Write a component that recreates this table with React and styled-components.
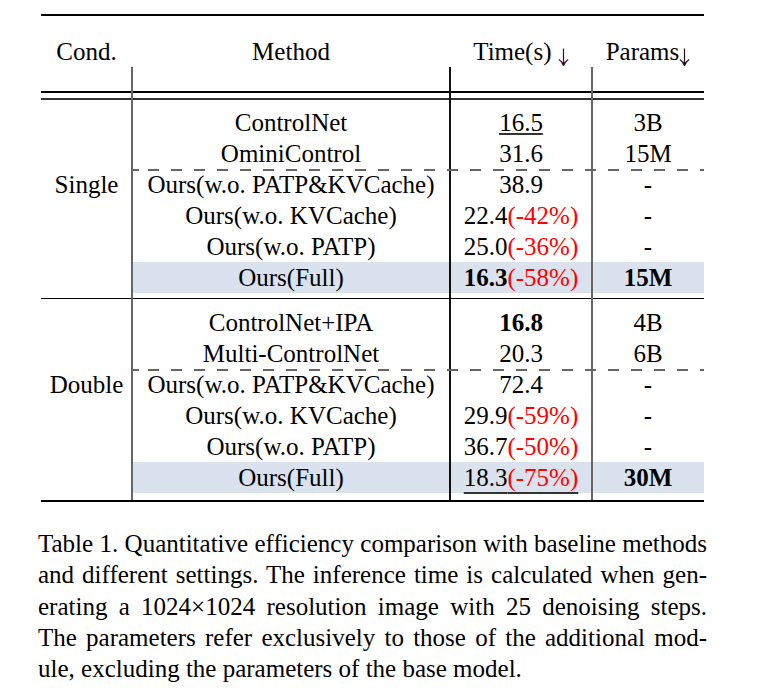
import React from "react";
import styled, { createGlobalStyle } from "styled-components";

const Global = createGlobalStyle`
  html, body { margin: 0; padding: 0; background: #fff; }
  body { font-family: "Liberation Serif", "Times New Roman", serif; color: #000; }
`;

const Page = styled.div`
  padding: 14px 0 0 38px;
  width: 759px;
  box-sizing: border-box;
`;

const TableBox = styled.div`
  margin-left: 3px;
  width: 663px;
  font-size: 25px;
`;

const TopRule = styled.div`
  height: 2px;
  background: #000;
`;

const Grid = styled.div`
  display: grid;
  grid-template-columns: 91px 318px 142px 112px;
  grid-template-rows: 51px 24px 2px 5px 2px 7px repeat(6, 31px) 5px 1px 8px repeat(6, 31px) 7px 2px;
`;

const HeadCell = styled.div`
  grid-row: 1;
  grid-column: ${(p) => p.$col};
  padding-top: 20px;
  line-height: 31px;
  text-align: center;
  white-space: nowrap;
`;

const Arrow = styled.svg`
  display: inline-block;
  width: 11px;
  height: 18px;
  vertical-align: -6px;
`;

const HRule = styled.div`
  grid-column: 1 / -1;
  grid-row: ${(p) => p.$row};
  background: ${(p) => p.$color || "#000"};
  z-index: 2;
`;

const VLine = styled.div`
  grid-column: ${(p) => p.$col};
  grid-row: 2 / 23;
  justify-self: start;
  width: ${(p) => p.$w}px;
  margin-left: ${(p) => -p.$w / 2}px;
  background: ${(p) => p.$color};
  z-index: 3;
`;

const Cell = styled.div`
  grid-row: ${(p) => p.$row};
  grid-column: ${(p) => p.$col};
  line-height: 31px;
  text-align: center;
  white-space: nowrap;
  background: ${(p) => (p.$hl ? "#dae3ed" : "transparent")};
`;

const CondCell = styled.div`
  grid-row: ${(p) => p.$row};
  grid-column: 1;
  line-height: 31px;
  text-align: center;
`;

const DashRule = styled.div`
  grid-row: ${(p) => p.$row};
  grid-column: 2 / -1;
  align-self: start;
  height: 2px;
  background-image: repeating-linear-gradient(
    to right,
    #666 0 11px,
    transparent 11px 23px
  );
  background-position: 16px 0;
  z-index: 4;
`;

const Bold = styled.b`
  font-weight: 700;
`;

const Red = styled.span`
  color: #ff0000;
`;

const Under = styled.span`
  text-decoration: underline;
  text-decoration-color: #333;
  text-decoration-thickness: 1.5px;
  text-underline-offset: ${(p) => p.$off}px;
  text-decoration-skip-ink: none;
`;

const Caption = styled.div`
  margin-top: 26px;
  width: 669px;
  font-size: 25px;
  line-height: 31.25px;
`;

const CapLine = styled.div`
  text-align: justify;
  text-align-last: ${(p) => (p.$last ? "left" : "justify")};
`;

const DownArrow = ({ color }) => (
  <Arrow viewBox="0 0 11 18">
    <path
      d="M5.5 0.5 V17.2 M0.8 11.6 Q4.2 13.6 5.5 17.6 Q6.8 13.6 10.2 11.6"
      fill="none"
      stroke={color}
      strokeWidth="1.2"
    />
  </Arrow>
);

const sections = [
  {
    cond: "Single",
    start: 7,
    rows: [
      { m: "ControlNet", t: <Under $off={2}>16.5</Under>, p: "3B" },
      { m: "OminiControl", t: "31.6", p: "15M" },
      { m: "Ours(w.o. PATP&KVCache)", t: "38.9", p: "-" },
      { m: "Ours(w.o. KVCache)", t: <>22.4<Red>(-42%)</Red></>, p: "-" },
      { m: "Ours(w.o. PATP)", t: <>25.0<Red>(-36%)</Red></>, p: "-" },
      {
        m: "Ours(Full)",
        t: <><Bold>16.3</Bold><Red>(-58%)</Red></>,
        p: <Bold>15M</Bold>,
        hl: true,
      },
    ],
  },
  {
    cond: "Double",
    start: 16,
    rows: [
      { m: "ControlNet+IPA", t: <Bold>16.8</Bold>, p: "4B" },
      { m: "Multi-ControlNet", t: "20.3", p: "6B" },
      { m: "Ours(w.o. PATP&KVCache)", t: "72.4", p: "-" },
      { m: "Ours(w.o. KVCache)", t: <>29.9<Red>(-59%)</Red></>, p: "-" },
      { m: "Ours(w.o. PATP)", t: <>36.7<Red>(-50%)</Red></>, p: "-" },
      {
        m: "Ours(Full)",
        t: <Under $off={6}>18.3<Red>(-75%)</Red></Under>,
        p: <Bold>30M</Bold>,
        hl: true,
      },
    ],
  },
];

const captionLines = [
  "Table 1. Quantitative efficiency comparison with baseline methods",
  "and different settings. The inference time is calculated when gen-",
  "erating a 1024×1024 resolution image with 25 denoising steps.",
  "The parameters refer exclusively to those of the additional mod-",
  "ule, excluding the parameters of the base model.",
];

export default function App() {
  return (
    <Page>
      <Global />
      <TableBox>
        <TopRule />
        <Grid>
          <HeadCell $col={1}>Cond.</HeadCell>
          <HeadCell $col={2}>Method</HeadCell>
          <HeadCell $col={3}>
            Time(s) <DownArrow color="#3d0a35" />
          </HeadCell>
          <HeadCell $col={4}>
            Params<DownArrow color="#1e0c1c" />
          </HeadCell>

          {sections.map((s) => (
            <React.Fragment key={s.cond}>
              <CondCell $row={s.start + 2}>{s.cond}</CondCell>
              {s.rows.map((r, i) => (
                <React.Fragment key={i}>
                  <Cell $row={s.start + i} $col={2} $hl={r.hl}>{r.m}</Cell>
                  <Cell $row={s.start + i} $col={3} $hl={r.hl}>{r.t}</Cell>
                  <Cell $row={s.start + i} $col={4} $hl={r.hl}>{r.p}</Cell>
                </React.Fragment>
              ))}
              <DashRule $row={s.start + 2} />
            </React.Fragment>
          ))}

          <HRule $row={3} $color="#000" />
          <HRule $row={5} $color="#333" />
          <HRule $row={14} $color="#000" />
          <HRule $row={23} $color="#000" />

          <VLine $col={2} $w={2} $color="#666" />
          <VLine $col={3} $w={1.5} $color="#111" />
          <VLine $col={4} $w={2} $color="#666" />
        </Grid>
      </TableBox>
      <Caption>
        {captionLines.map((l, i) => (
          <CapLine key={i} $last={i === captionLines.length - 1}>
            {l}
          </CapLine>
        ))}
      </Caption>
    </Page>
  );
}
